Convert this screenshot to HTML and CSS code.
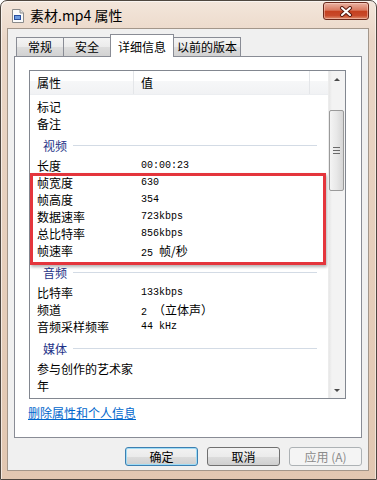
FILE: index.html
```html
<!DOCTYPE html>
<html lang="zh-CN">
<head>
  <meta charset="UTF-8" />
  <title>素材.mp4 属性</title>
  <link rel="stylesheet" href="styles.css">
</head>
<body>
  <div class="window">
    <div class="titlebar">
      <svg class="file-icon" width="12" height="14" viewBox="0 0 12 14">
        <path d="M0.5 0.5 H8 L11.5 4 V13.5 H0.5 Z" fill="#fbfbfb" stroke="#8a8a8a"/>
        <path d="M8 0.5 V4 H11.5" fill="#e4e4e4" stroke="#8a8a8a"/>
        <rect x="2" y="6" width="7" height="5" fill="#2a4f9e"/>
        <rect x="3" y="7" width="5" height="3" fill="#6d9be0"/>
      </svg>
      <span class="title">素材.mp4 属性</span>
      <button class="close">
        <svg width="14" height="11" viewBox="0 0 14 11">
          <path d="M3 2 L11 9 M11 2 L3 9" stroke="#5a1c12" stroke-width="4" stroke-linecap="round"/>
          <path d="M3 2 L11 9 M11 2 L3 9" stroke="#ffffff" stroke-width="2" stroke-linecap="round"/>
        </svg>
      </button>
    </div>

    <div class="client">
      <div class="tabs">
        <div class="tab tab-w1">常规</div>
        <div class="tab tab-w1">安全</div>
        <div class="tab tab-w2 active">详细信息</div>
        <div class="tab tab-w3">以前的版本</div>
      </div>

      <div class="panel">
        <div class="listbox">
          <div class="list-main">
            <div class="list-header">
              <div class="col col-name">属性</div>
              <div class="col col-value">值</div>
              <div class="col col-rest"></div>
            </div>

            <div class="list-body">
              <div class="row"><span class="name">标记</span><span class="value"></span></div>
              <div class="row"><span class="name">备注</span><span class="value"></span></div>

              <div class="group"><span>视频</span></div>
              <div class="row"><span class="name">长度</span><span class="value">00:00:23</span></div>
              <div class="row"><span class="name">帧宽度</span><span class="value">630</span></div>
              <div class="row"><span class="name">帧高度</span><span class="value">354</span></div>
              <div class="row"><span class="name">数据速率</span><span class="value">723kbps</span></div>
              <div class="row"><span class="name">总比特率</span><span class="value">856kbps</span></div>
              <div class="row"><span class="name">帧速率</span><span class="value">25 <span class="cjk">帧/秒</span></span></div>

              <div class="group"><span>音频</span></div>
              <div class="row"><span class="name">比特率</span><span class="value">133kbps</span></div>
              <div class="row"><span class="name">频道</span><span class="value">2 <span class="cjk">（立体声）</span></span></div>
              <div class="row"><span class="name">音频采样频率</span><span class="value">44 kHz</span></div>

              <div class="group"><span>媒体</span></div>
              <div class="row"><span class="name">参与创作的艺术家</span><span class="value"></span></div>
              <div class="row"><span class="name">年</span><span class="value"></span></div>
            </div>

            <div class="mark"></div>
          </div>

          <div class="scrollbar">
            <div class="sb-arrow sb-up"></div>
            <div class="sb-track">
              <div class="sb-thumb"><span class="grip"></span></div>
            </div>
            <div class="sb-arrow sb-down"></div>
          </div>
        </div>

        <a class="remove-link" href="#">删除属性和个人信息</a>
      </div>

      <div class="actions">
        <button class="btn btn-default">确定</button>
        <button class="btn">取消</button>
        <button class="btn" disabled>应用 (A)</button>
      </div>
    </div>
  </div>
</body>
</html>
```

FILE: styles.css
```css
* {
  box-sizing: border-box;
}

body {
  margin: 0;
  background: #ffffff;
  font-family: "Noto Sans CJK SC", "Liberation Sans", sans-serif;
  font-size: 12px;
  color: #000;
  overflow: hidden;
}

.window {
  width: 377px;
  height: 480px;
  border: 1px solid #4f4740;
  border-radius: 7px 7px 0 0;
  background: linear-gradient(to bottom, #f3e6db 0, #ead6c6 40px, #e2c7b1 100%);
  padding: 0 7px 8px 6px;
  display: flex;
  flex-direction: column;
  box-shadow: inset 1px 1px 0 rgba(255, 255, 255, 0.6), inset -1px 0 0 rgba(255, 255, 255, 0.5);
}

/* title bar */
.titlebar {
  height: 27px;
  display: flex;
  align-items: flex-start;
}

.file-icon {
  margin: 8px 0 0 5px;
  flex: none;
}

.title {
  margin: 4px 0 0 6px;
  font-size: 14px;
  line-height: 20px;
  color: #000;
}

.close {
  margin: 1px 0 0 auto;
  width: 46px;
  height: 18px;
  border: 1px solid #6b2a1c;
  border-radius: 3px;
  padding: 0;
  display: flex;
  align-items: center;
  justify-content: center;
  background: linear-gradient(to bottom, #eab3a2 0%, #d9785f 45%, #c5401f 52%, #c8492a 78%, #e09070 100%);
  box-shadow: inset 0 0 0 1px rgba(255, 220, 210, 0.45);
}

/* client area */
.client {
  flex: 1;
  border: 1px solid #a3968a;
  background: #f0f0f0;
  padding: 5px 6px 0 6px;
  display: flex;
  flex-direction: column;
}

.tabs {
  height: 22px;
  display: flex;
  align-items: flex-end;
  padding-left: 2px;
  position: relative;
  z-index: 1;
}

.tab {
  height: 19px;
  margin-right: -1px;
  border: 1px solid #898c95;
  border-bottom: none;
  background: linear-gradient(to bottom, #f4f4f4 0%, #ebebeb 50%, #dddddd 50%, #d2d2d2 100%);
  text-align: center;
  line-height: 18px;
  white-space: nowrap;
}

.tab-w1 { width: 48px; }
.tab-w2 { width: 64px; }
.tab-w3 { width: 68px; }

.tab.active {
  height: 23px;
  margin-bottom: -1px;
  background: #ffffff;
  padding-top: 2px;
  line-height: 19px;
}

.panel {
  height: 382px;
  border: 1px solid #898c95;
  background: #ffffff;
  padding: 13px 15px 0 14px;
}

/* details list */
.listbox {
  height: 329px;
  border: 1px solid #828790;
  display: flex;
}

.list-main {
  flex: 1;
  position: relative;
  overflow: hidden;
}

.list-header {
  height: 24px;
  display: flex;
  background: linear-gradient(to bottom, #ffffff 0%, #ffffff 45%, #f6f7f8 45%, #f1f2f4 100%);
  border-bottom: 1px solid #eceef1;
}

.col {
  line-height: 23px;
  padding-left: 7px;
}

.col-name {
  width: 104px;
  border-right: 1px solid #e4e6e9;
}

.col-value {
  width: 176px;
  border-right: 1px solid #e4e6e9;
}

.col-rest {
  flex: 1;
}

.list-body {
  padding-top: 3px;
}

.row {
  height: 17px;
  display: flex;
  align-items: center;
  white-space: nowrap;
}

.name {
  width: 104px;
  padding-left: 7px;
  flex: none;
}

.value {
  padding-left: 7px;
  font-family: "Liberation Mono", "DejaVu Sans Mono", monospace;
  font-size: 10px;
}

.value .cjk {
  font-family: "Noto Sans CJK SC", sans-serif;
  font-size: 12px;
}

.group {
  height: 25px;
  display: flex;
  align-items: center;
  padding: 1px 11px 0 13px;
  color: #1e3287;
}

.group::after {
  content: "";
  flex: 1;
  height: 1px;
  margin-left: 6px;
  background: #d3dbe5;
}

/* red annotation frame drawn over the rows */
.mark {
  position: absolute;
  left: 0;
  top: 102px;
  width: 296px;
  height: 92px;
  border: 3px solid #e4353c;
  box-shadow: 1px 2px 3px rgba(0, 0, 0, 0.3);
  pointer-events: none;
}

/* scrollbar */
.scrollbar {
  width: 17px;
  display: flex;
  flex-direction: column;
  background: linear-gradient(to right, #e6e6e6 0, #f3f3f3 3px, #f3f3f3 100%);
  border-left: 1px solid #ececec;
}

.sb-arrow {
  height: 17px;
  position: relative;
}

.sb-arrow::after {
  content: "";
  position: absolute;
  left: 5px;
  border-left: 3px solid transparent;
  border-right: 3px solid transparent;
}

.sb-up::after {
  top: 7px;
  border-bottom: 3px solid #4a4a4a;
}

.sb-down::after {
  top: 8px;
  border-top: 3px solid #4a4a4a;
}

.sb-track {
  flex: 1;
}

.sb-thumb {
  margin: 22px 1px 0 0;
  height: 81px;
  border: 1px solid #9a9a9a;
  border-radius: 2px;
  background: linear-gradient(to right, #f4f4f4 0%, #e8e8e8 50%, #d6d6d6 100%);
  display: flex;
  align-items: center;
  justify-content: center;
}

.grip {
  width: 7px;
  height: 7px;
  background: repeating-linear-gradient(to bottom, #6a6a6a 0, #6a6a6a 1px, transparent 1px, transparent 3px);
}

.remove-link {
  display: block;
  width: fit-content;
  margin: 6px 0 0 -1px;
  line-height: 16px;
  color: #0066cc;
  text-decoration: underline;
}

/* dialog buttons */
.actions {
  display: flex;
  justify-content: flex-end;
  gap: 9px;
  padding-top: 9px;
}

.btn {
  width: 73px;
  height: 19px;
  padding: 0;
  border: 1px solid #707070;
  border-radius: 3px;
  background: linear-gradient(to bottom, #f2f2f2 0%, #ebebeb 50%, #dddddd 50%, #cfcfcf 100%);
  font-family: "Noto Sans CJK SC", sans-serif;
  font-size: 12px;
  line-height: 16px;
  color: #000;
}

.btn-default {
  border-color: #3c7fb1;
  box-shadow: inset 0 0 0 1px #9fdcf6;
}

.btn:disabled {
  border-color: #adb2b5;
  background: #f4f4f4;
  color: #8b8b8b;
}
```
